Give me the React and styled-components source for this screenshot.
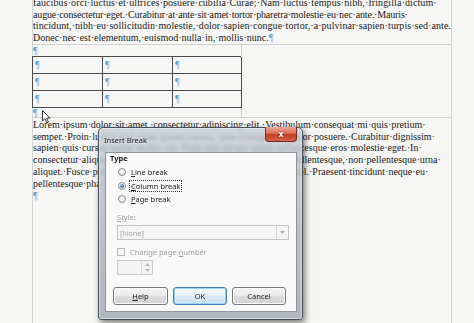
import React from "react";
import styled, { createGlobalStyle } from "styled-components";

const Global = createGlobalStyle`
  html, body { margin: 0; padding: 0; background: #f6f6f4; overflow: hidden; }
  #root { width: 474px; height: 323px; }
`;

const Screen = styled.div`
  position: relative;
  width: 474px;
  height: 323px;
  overflow: hidden;
  background: #f6f6f4;
  display: flex;
`;

const Gutter = styled.div`
  width: 32px;
  flex: none;
`;

const Page = styled.div`
  width: 418px;
  flex: none;
  border-left: 1px solid #d4d4d2;
  border-right: 1px solid #d4d4d2;
  display: flex;
  flex-direction: column;
  font-family: "Liberation Serif", "Times New Roman", serif;
  font-size: 10px;
  color: #1a1a1a;
`;

const Para = styled.div`
  margin-top: ${(p) => p.$top || 0}px;
  line-height: ${(p) => p.$lh || 11.7}px;
  white-space: nowrap;
`;

const Line = styled.div`
  height: ${(p) => p.$lh || 11.7}px;
  letter-spacing: ${(p) => p.$ls || 0}px;
`;

const Pil = styled.span`
  color: #4ea8e2;
`;

const TableSection = styled.div`
  border-top: 1px solid #d2d2d0;
  border-bottom: 1px solid #d2d2d0;
  display: flex;
`;

const TableFrame = styled.div`
  width: 209px;
  margin-left: -1px;
  border-right: 1px solid #d2d2d0;
  display: flex;
  flex-direction: column;
`;

const EmptyLine = styled.div`
  height: ${(p) => p.$h}px;
  line-height: ${(p) => p.$h}px;
  padding-left: 1px;
`;

const Grid = styled.div`
  display: grid;
  grid-template-columns: 70px 70px 69px;
  grid-auto-rows: 17px;
  border-top: 1px solid #4a4a4a;
  border-left: 1px solid #4a4a4a;
`;

const Cell = styled.div`
  border-right: 1px solid #4a4a4a;
  border-bottom: 1px solid #4a4a4a;
  padding-left: 2px;
  line-height: 16px;
`;

const Dialog = styled.div`
  position: absolute;
  left: 98px;
  top: 127px;
  width: 205px;
  height: 193px;
  box-sizing: border-box;
  border: 1px solid #46505a;
  border-radius: 5px 5px 3px 3px;
  background: linear-gradient(180deg, rgba(196, 204, 212, 0.78) 0%, rgba(182, 190, 198, 0.88) 40%, rgba(170, 178, 186, 0.94) 100%);
  backdrop-filter: blur(1.6px);
  box-shadow: 2px 3px 6px rgba(0, 0, 0, 0.5), inset 0 0 0 1px rgba(255, 255, 255, 0.45);
  display: flex;
  flex-direction: column;
  padding: 0 5px 7px 6px;
  font-family: "Noto Sans", "Open Sans", sans-serif;
  font-size: 7.5px;
  color: #1b1b1b;
`;

const TitleBar = styled.div`
  height: 24px;
  flex: none;
  display: flex;
  align-items: center;
  margin-left: -1px;
  font-size: 7.5px;
  color: #1a1a1a;
  text-shadow: 0 0 4px rgba(255, 255, 255, 0.9);
`;

const CloseBtn = styled.div`
  position: absolute;
  right: 5px;
  top: -1px;
  width: 32px;
  height: 15px;
  box-sizing: border-box;
  border: 1px solid #7a2a1e;
  border-top: none;
  border-radius: 0 0 4px 4px;
  background: linear-gradient(180deg, #e9a796 0%, #d9705a 45%, #c2391f 55%, #d4674b 100%);
  display: flex;
  align-items: center;
  justify-content: center;
  color: #fff;
  font-family: "DejaVu Sans", sans-serif;
  font-weight: bold;
  font-size: 8px;
  text-shadow: 0 0 2px rgba(80, 0, 0, 0.8);
`;

const Client = styled.div`
  flex: 1;
  background: #f9f9f9;
  border: 1px solid #8d949b;
  display: flex;
  flex-direction: column;
  padding: 0 0 0 4px;
`;

const GroupLabel = styled.div`
  font-weight: bold;
  height: 10px;
  line-height: 10px;
`;

const RadioList = styled.div`
  display: flex;
  flex-direction: column;
  margin-top: 2.5px;
  padding-left: 8px;
`;

const RadioRow = styled.div`
  height: 13.5px;
  display: flex;
  align-items: center;
  gap: 4px;
`;

const Radio = styled.span`
  width: 8px;
  height: 8px;
  box-sizing: border-box;
  border-radius: 50%;
  border: 1px solid #8f8f8f;
  background: radial-gradient(circle at 50% 40%, #ffffff 0%, #e4e4e4 80%);
  display: flex;
  align-items: center;
  justify-content: center;
  &::after {
    content: "";
    width: 4px;
    height: 4px;
    border-radius: 50%;
    background: ${(p) => (p.$on ? "radial-gradient(circle at 40% 35%, #8fb8de, #1f4f86)" : "transparent")};
  }
`;

const RadioText = styled.span`
  line-height: 10px;
  padding: 0 1px;
  outline: ${(p) => (p.$focus ? "1px dotted #333" : "none")};
`;

const Dim = styled.div`
  color: #a2a2a2;
  height: 10px;
  line-height: 10px;
  margin-top: ${(p) => p.$mt}px;
  padding-left: 7px;
`;

const Combo = styled.div`
  margin-top: 3px;
  margin-left: 7px;
  width: 172px;
  height: 15px;
  box-sizing: border-box;
  border: 1px solid #c4c4c4;
  background: #f4f4f4;
  display: flex;
  align-items: center;
  color: #a8a8a8;
  padding-left: 2px;
`;

const ComboText = styled.span`
  flex: 1;
`;

const ComboArrow = styled.span`
  width: 11px;
  height: 13px;
  border-left: 1px solid #d6d6d6;
  display: flex;
  align-items: center;
  justify-content: center;
`;

const CheckRow = styled.div`
  margin-top: 7px;
  margin-left: 7px;
  height: 10px;
  display: flex;
  align-items: center;
  gap: 5px;
  color: #9e9e9e;
`;

const Check = styled.span`
  width: 8px;
  height: 8px;
  box-sizing: border-box;
  border: 1px solid #b5b5b5;
  background: #f6f6f6;
`;

const Spin = styled.div`
  margin-top: 3px;
  margin-left: 7px;
  width: 36px;
  height: 15px;
  box-sizing: border-box;
  border: 1px solid #cacaca;
  background: #f4f4f4;
  display: flex;
  justify-content: flex-end;
`;

const SpinBtns = styled.div`
  width: 10px;
  border-left: 1px solid #dcdcdc;
  display: flex;
  flex-direction: column;
  align-items: center;
  justify-content: space-evenly;
`;

const Buttons = styled.div`
  margin-top: 12px;
  margin-left: 3px;
  display: flex;
  gap: 5px;
`;

const Button = styled.div`
  width: ${(p) => p.$w}px;
  height: 18px;
  box-sizing: border-box;
  border: 1px solid ${(p) => (p.$def ? "#3b7fb8" : "#7a7a7a")};
  border-radius: 3px;
  background: ${(p) =>
    p.$def
      ? "linear-gradient(180deg, #f4fafe 0%, #e8f2fa 50%, #d8e9f6 51%, #cfe3f3 100%)"
      : "linear-gradient(180deg, #f4f4f4 0%, #ebebeb 50%, #dddddd 51%, #d2d2d2 100%)"};
  box-shadow: inset 0 0 0 1px ${(p) => (p.$def ? "#9ed3f5" : "#fbfbfb")};
  display: flex;
  align-items: center;
  justify-content: center;
  color: #1e1e1e;
`;

const Cursor = styled.svg`
  position: absolute;
  left: 42px;
  top: 110px;
`;

const d = (s) => s.replace(/ /g, "·");

const top = [
  ["faucibus orci luctus et ultrices posuere cubilia Curae; Nam luctus tempus nibh, fringilla dictum ", 0.1],
  ["augue consectetur eget. Curabitur at ante sit amet tortor pharetra molestie eu nec ante. Mauris ", -0.15],
  ["tincidunt, nibh eu sollicitudin molestie, dolor sapien congue tortor, a pulvinar sapien turpis sed ante.", 0.06],
];

const bottom = [
  "Lorem ipsum dolor sit amet, consectetur adipiscing elit. Vestibulum consequat mi quis pretium ",
  "semper. Proin luctus nisl vitae ipsum cursus, quis tristique est dolor posuere. Curabitur dignissim ",
  "sapien quis cursus tortor mattis vel. Nam nisi ornare quam pellentesque eros molestie eget. In ",
  "consectetur aliquam ante a nisi, vitae vulputate dui tempus ac. Pellentesque, non pellentesque urna ",
  "aliquet. Fusce pharetra ligula sit amet sed erat facilisis posuere vel. Praesent tincidunt neque eu ",
];

export default function App() {
  return (
    <>
      <Global />
      <Screen>
        <Gutter />
        <Page>
          <Para $top={-3}>
            {top.map(([t, ls], i) => (
              <Line key={i} $ls={ls}>
                {d(t)}
              </Line>
            ))}
            <Line>
              {d("Donec nec est elementum, euismod nulla in, mollis nunc.")}
              <Pil>¶</Pil>
            </Line>
          </Para>
          <TableSection>
            <TableFrame>
              <EmptyLine $h={11}>
                <Pil>¶</Pil>
              </EmptyLine>
              <Grid>
                {Array.from({ length: 9 }).map((_, i) => (
                  <Cell key={i}>
                    <Pil>¶</Pil>
                  </Cell>
                ))}
              </Grid>
              <EmptyLine $h={9}>
                <Pil>¶</Pil>
              </EmptyLine>
            </TableFrame>
          </TableSection>
          <Para $top={1} $lh={11.8}>
            {bottom.map((t, i) => (
              <Line key={i} $lh={11.8}>
                {d(t)}
              </Line>
            ))}
            <Line $lh={11.8}>
              {d("pellentesque pharetra.")}
              <Pil>¶</Pil>
            </Line>
            <Line $lh={11.8}>
              <Pil>¶</Pil>
            </Line>
          </Para>
        </Page>
        <Cursor width="9" height="14" viewBox="0 0 9 14">
          <path d="M0.5 0.5 L0.5 11 L3 8.6 L4.8 12.8 L6.4 12.1 L4.7 8.1 L8 8.1 Z" fill="#fff" stroke="#222" strokeWidth="0.9" strokeLinejoin="round" />
        </Cursor>
        <Dialog>
          <TitleBar>Insert Break</TitleBar>
          <CloseBtn>x</CloseBtn>
          <Client>
            <GroupLabel>Type</GroupLabel>
            <RadioList>
              <RadioRow>
                <Radio />
                <RadioText>
                  <u>L</u>ine break
                </RadioText>
              </RadioRow>
              <RadioRow>
                <Radio $on />
                <RadioText $focus>
                  <u>C</u>olumn break
                </RadioText>
              </RadioRow>
              <RadioRow>
                <Radio />
                <RadioText>
                  <u>P</u>age break
                </RadioText>
              </RadioRow>
            </RadioList>
            <Dim $mt={6}>
              <u>S</u>tyle:
            </Dim>
            <Combo>
              <ComboText>[None]</ComboText>
              <ComboArrow>
                <svg width="5" height="3" viewBox="0 0 5 3">
                  <path d="M0 0 L5 0 L2.5 3 Z" fill="#b0b0b0" />
                </svg>
              </ComboArrow>
            </Combo>
            <CheckRow>
              <Check />
              <span>
                Change page <u>n</u>umber
              </span>
            </CheckRow>
            <Spin>
              <SpinBtns>
                <svg width="5" height="3" viewBox="0 0 5 3">
                  <path d="M0 3 L5 3 L2.5 0 Z" fill="#b8b8b8" />
                </svg>
                <svg width="5" height="3" viewBox="0 0 5 3">
                  <path d="M0 0 L5 0 L2.5 3 Z" fill="#b8b8b8" />
                </svg>
              </SpinBtns>
            </Spin>
            <Buttons>
              <Button $w={55}>
                <span>
                  <u>H</u>elp
                </span>
              </Button>
              <Button $w={54} $def>
                OK
              </Button>
              <Button $w={54}>Cancel</Button>
            </Buttons>
          </Client>
        </Dialog>
      </Screen>
    </>
  );
}
